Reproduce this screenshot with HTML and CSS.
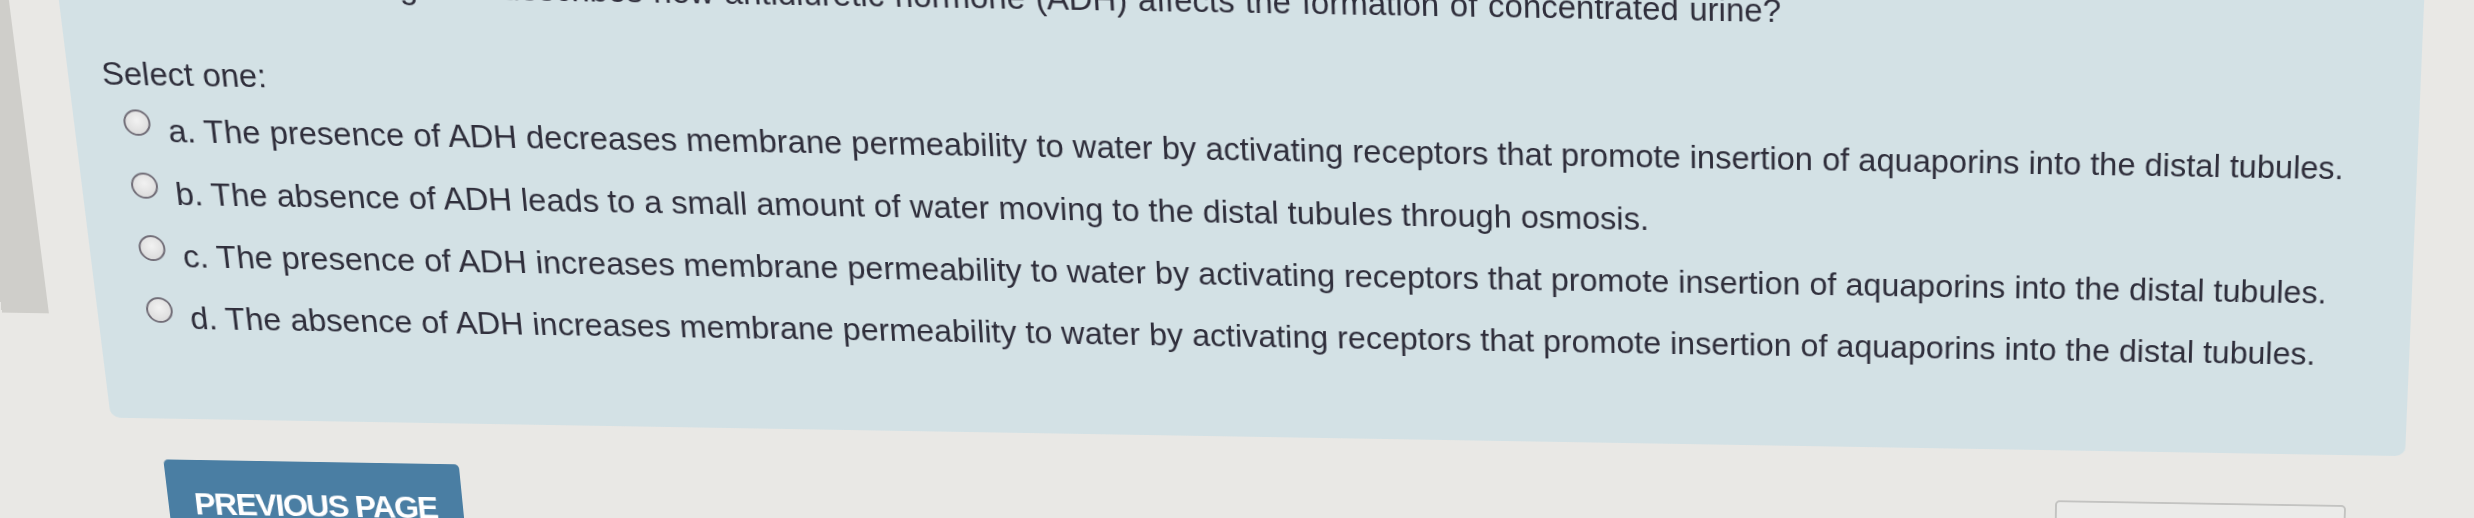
FILE: index.html
```html
<!DOCTYPE html>
<html lang="en">
<head>
<meta charset="utf-8">
<title>Quiz – page 2</title>
<link rel="stylesheet" href="styles.css">
</head>
<body>
<div class="screen">
  <main class="page">
    <div class="edge"></div>
    <section class="formulation">
      <p class="qtext">Which of the following best describes how antidiuretic hormone (ADH) affects the formation of concentrated urine?</p>
      <p class="prompt">Select one:</p>
      <div class="answer">
        <label class="choice"><span class="radio"></span><span class="label">a. The presence of ADH decreases membrane permeability to water by activating receptors that promote insertion of aquaporins into the distal tubules.</span></label>
        <label class="choice"><span class="radio"></span><span class="label">b. The absence of ADH leads to a small amount of water moving to the distal tubules through osmosis.</span></label>
        <label class="choice"><span class="radio"></span><span class="label">c. The presence of ADH increases membrane permeability to water by activating receptors that promote insertion of aquaporins into the distal tubules.</span></label>
        <label class="choice"><span class="radio"></span><span class="label">d. The absence of ADH increases membrane permeability to water by activating receptors that promote insertion of aquaporins into the distal tubules.</span></label>
      </div>
    </section>
    <nav class="pager">
      <button class="btn btn-prev" type="button">PREVIOUS PAGE</button>
      <button class="btn btn-next" type="button">NEXT PAGE</button>
    </nav>
  </main>
</div>
</body>
</html>
```

FILE: styles.css
```css
html, body {
  margin: 0;
  padding: 0;
}

body {
  font-family: "Liberation Sans", Arial, sans-serif;
  background: #e8e8e5;
}

/* viewport: the page sheet is tilted slightly, like a monitor seen at an angle */
.screen {
  width: 2474px;
  height: 518px;
  overflow: hidden;
  background: #e9e8e5;
}

.page {
  display: grid;
  grid-template-columns: 8px 2466px;
  align-items: start;
  transform-origin: 1250px 0;
  transform: perspective(2000px) rotateX(-8deg) skewY(1deg) skewX(2.3deg);
}

/* strip of the neighbouring block on the far left */
.edge {
  grid-row: 1;
  grid-column: 1;
  width: 48px;
  height: 345px;
  margin-left: -40px;
  background: #cfceca;
}

/* question card */
.formulation {
  grid-row: 1;
  grid-column: 2;
  box-sizing: border-box;
  width: 2367px;
  margin: -60px 0 0 50px;
  padding: 42px 0 75px 34px;
  background: #d3e1e5;
  border-radius: 0 0 10px 10px;
  color: #2f2e3b;
}

.qtext {
  margin: 0;
  font-size: 33px;
  line-height: 40px;
  word-spacing: 1.5px;
  white-space: nowrap;
}

.prompt {
  margin: 53px 0 0;
  font-size: 33px;
  line-height: 40px;
}

.answer {
  margin-top: 5px;
  padding-left: 16px;
}

.choice {
  display: flex;
  align-items: flex-start;
  gap: 17px;
  height: 65px;
  font-size: 33px;
  line-height: 65px;
  white-space: nowrap;
}

.radio {
  flex: none;
  box-sizing: border-box;
  width: 27px;
  height: 27px;
  margin-top: 11px;
  border: 2.5px solid #716d77;
  border-radius: 50%;
  background: radial-gradient(circle at 50% 40%, #f2f2f2, #d6d6d6);
}

/* navigation buttons under the card */
.pager {
  grid-row: 2;
  grid-column: 1 / -1;
  display: flex;
  align-items: flex-start;
  justify-content: space-between;
  margin: 44px 108px 0 107px;
}

.btn {
  box-sizing: border-box;
  width: 305px;
  height: 80px;
  padding: 14px 0 0;
  border-radius: 5px;
  font: bold 33px/33px "Liberation Sans", Arial, sans-serif;
  letter-spacing: -1.5px;
  text-align: center;
}

.btn-prev {
  border: 0;
  background: #4a7ea3;
  color: #ffffff;
}

.btn-next {
  width: 302px;
  height: 130px;
  margin-top: 10px;
  padding-top: 80px;
  border: 2px solid #c3c3c1;
  background: #ebebe9;
  color: #2f2e3b;
}
```
